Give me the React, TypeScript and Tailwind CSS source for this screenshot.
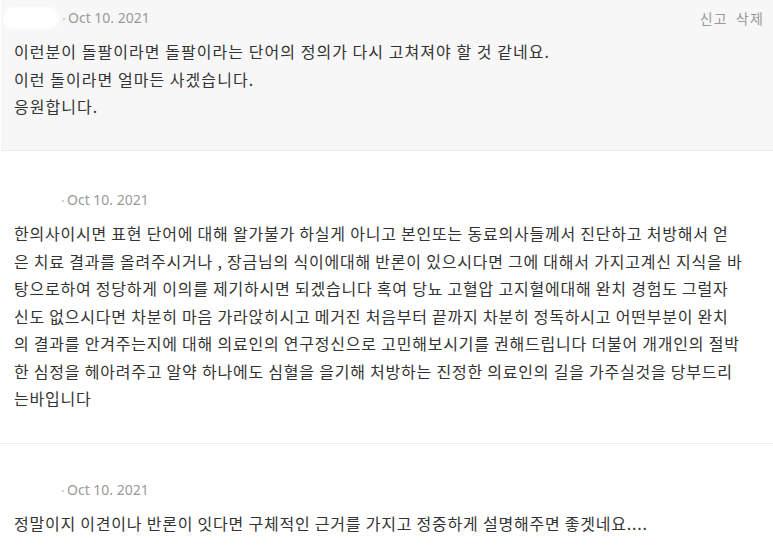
import React from "react";

const font = { fontFamily: '"Noto Sans CJK KR", "Noto Sans", sans-serif' };

function Header({ actions }: { actions?: boolean }) {
  return (
    <div className="flex items-center h-[20px] text-[14px] leading-[20px] text-[#9a9a9a]">
      <div className="ml-[2px] w-[56px] h-[22px] rounded-full bg-white blur-[1px]" />
      <span className="ml-[1px] w-[5px] text-[#c8c8c8]">·</span>
      <span className="ml-[3px]" style={{ fontFamily: '"Noto Sans", sans-serif' }}>Oct 10. 2021</span>
      {actions && (
        <div className="ml-auto mr-[9px] flex gap-[8px] tracking-[1.2px] text-[#9a9a9a]">
          <span>신고</span>
          <span>삭제</span>
        </div>
      )}
    </div>
  );
}

function Lines({ lines, wide }: { lines: string[]; wide?: boolean }) {
  return (
    <div
      className={
        wide
          ? "px-[14px] text-[16px] leading-[27.5px] tracking-[1.05px] text-[#333333]"
          : "px-[14px] text-[16px] leading-[27.5px] tracking-[0.78px] text-[#333333]"
      }
    >
      {lines.map((l, i) => (
        <div key={i} className="whitespace-nowrap">{l}</div>
      ))}
    </div>
  );
}

export default function App() {
  return (
    <div className="w-[773px] h-[556px] bg-white overflow-hidden" style={font}>
      <div className="h-[151px] bg-[#f7f7f7] border-b border-[#ebebeb] pt-[8px] ml-[1px]">
        <Header actions />
        <div className="mt-[10px] -ml-[1px]">
          <Lines
            wide
            lines={[
              "이런분이 돌팔이라면 돌팔이라는 단어의 정의가 다시 고쳐져야 할 것 같네요.",
              "이런 돌이라면 얼마든 사겠습니다.",
              "응원합니다.",
            ]}
          />
        </div>
      </div>
      <div className="pt-[39px] pb-[30px] border-b border-[#ececec]">
        <Header />
        <div className="mt-[10px]">
          <Lines
            lines={[
              "한의사이시면 표현 단어에 대해 왈가불가 하실게 아니고 본인또는 동료의사들께서 진단하고 처방해서 얻",
              "은 치료 결과를 올려주시거나 , 장금님의 식이에대해 반론이 있으시다면 그에 대해서 가지고계신 지식을 바",
              "탕으로하여 정당하게 이의를 제기하시면 되겠습니다 혹여 당뇨 고혈압 고지혈에대해 완치 경험도 그럴자",
              "신도 없으시다면 차분히 마음 가라앉히시고 메거진 처음부터 끝까지 차분히 정독하시고 어떤부분이 완치",
              "의 결과를 안겨주는지에 대해 의료인의 연구정신으로 고민해보시기를 권해드립니다 더불어 개개인의 절박",
              "한 심정을 헤아려주고 알약 하나에도 심혈을 을기해 처방하는 진정한 의료인의 길을 가주실것을 당부드리",
              "는바입니다",
            ]}
          />
        </div>
      </div>
      <div className="pt-[36px]">
        <Header />
        <div className="mt-[10px]">
          <Lines
            lines={[
              "정말이지 이견이나 반론이 잇다면 구체적인 근거를 가지고 정중하게 설명해주면 좋겟네요....",
            ]}
          />
        </div>
      </div>
    </div>
  );
}
